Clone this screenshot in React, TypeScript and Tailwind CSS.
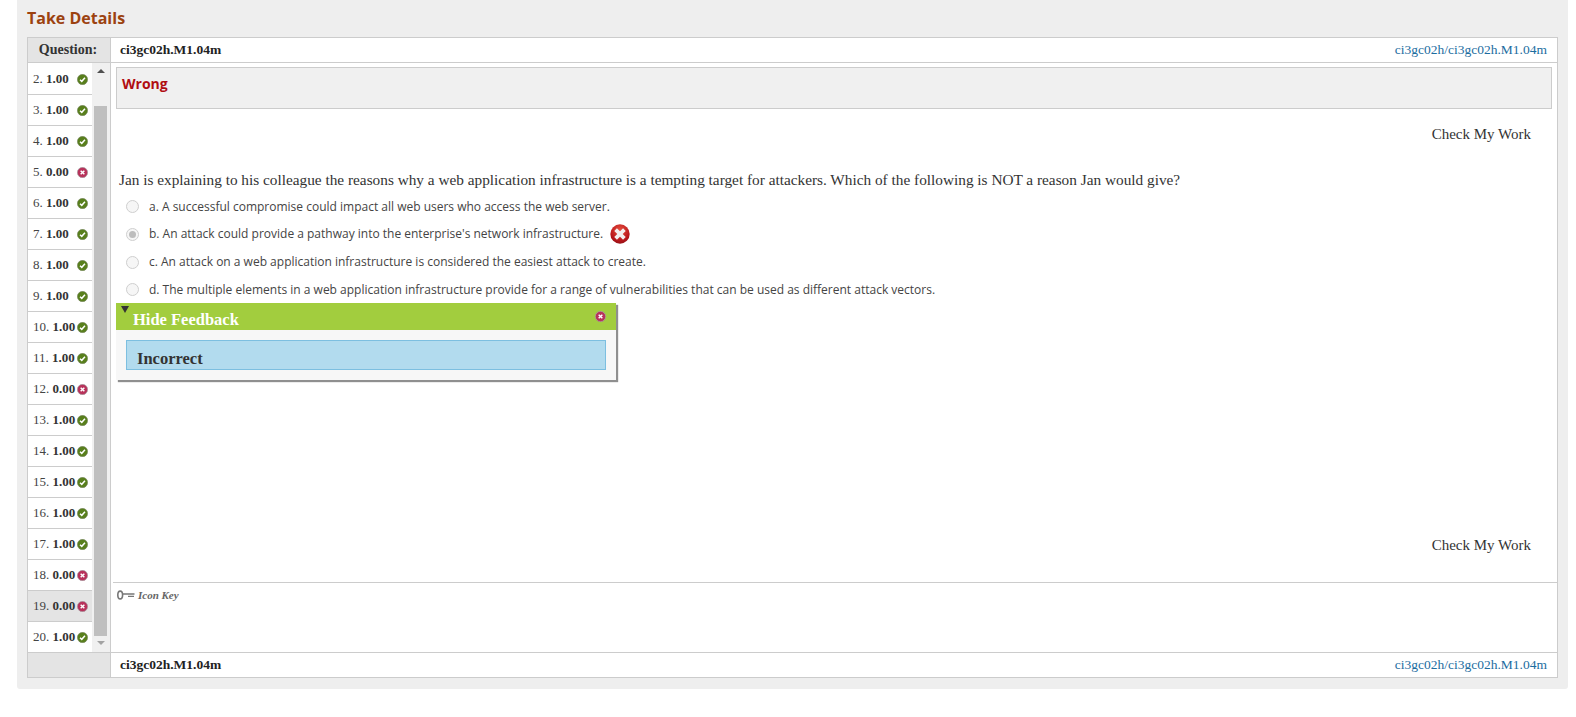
const SERIF = "font-['Liberation_Serif','Times_New_Roman',serif]";
const SANS = "font-['Open_Sans','Noto_Sans',sans-serif]";

const scores = [
  { n: 2, score: "1.00" },
  { n: 3, score: "1.00" },
  { n: 4, score: "1.00" },
  { n: 5, score: "0.00" },
  { n: 6, score: "1.00" },
  { n: 7, score: "1.00" },
  { n: 8, score: "1.00" },
  { n: 9, score: "1.00" },
  { n: 10, score: "1.00" },
  { n: 11, score: "1.00" },
  { n: 12, score: "0.00" },
  { n: 13, score: "1.00" },
  { n: 14, score: "1.00" },
  { n: 15, score: "1.00" },
  { n: 16, score: "1.00" },
  { n: 17, score: "1.00" },
  { n: 18, score: "0.00" },
  { n: 19, score: "0.00" },
  { n: 20, score: "1.00" },
];

const options = [
  { text: "a. A successful compromise could impact all web users who access the web server.", className: "h-[27px]" },
  { text: "b. An attack could provide a pathway into the enterprise's network infrastructure.", className: "h-[28px]", picked: true },
  { text: "c. An attack on a web application infrastructure is considered the easiest attack to create.", className: "h-[28px]" },
  { text: "d. The multiple elements in a web application infrastructure provide for a range of vulnerabilities that can be used as different attack vectors.", className: "h-[27px]" },
];

function CheckDot() {
  return (
    <svg viewBox="0 0 12 12" className="h-[11px] w-[11px] shrink-0" aria-hidden="true">
      <circle cx="6" cy="6" r="5.6" fill="#587f1c" stroke="#7d8c68" strokeWidth="0.7" />
      <path d="M3.3 6.2 5.2 8l3.5-4" fill="none" stroke="#fff" strokeWidth="1.6" />
    </svg>
  );
}

function CrossDot() {
  return (
    <svg viewBox="0 0 12 12" className="h-[11px] w-[11px] shrink-0" aria-hidden="true">
      <circle cx="6" cy="6" r="5.6" fill="#b8315a" stroke="#a9a0a4" strokeWidth="0.8" />
      <path d="M4 4l4 4M8 4l-4 4" fill="none" stroke="#fff" strokeWidth="1.6" />
    </svg>
  );
}

function BigCross() {
  return (
    <svg viewBox="0 0 20 20" className="-ml-[3px] h-[20px] w-[20px] shrink-0" aria-hidden="true">
      <defs>
        <radialGradient id="bigRed" cx="50%" cy="30%" r="75%">
          <stop offset="0%" stopColor="#e8503f" />
          <stop offset="70%" stopColor="#b8161b" />
          <stop offset="100%" stopColor="#8c0f14" />
        </radialGradient>
      </defs>
      <circle cx="10" cy="10" r="9.7" fill="url(#bigRed)" />
      <path d="M5.6 5.6l8.8 8.8M14.4 5.6l-8.8 8.8" fill="none" stroke="#f3efef" strokeWidth="3.8" />
    </svg>
  );
}

function KeyIcon() {
  return (
    <svg viewBox="0 0 18 10" className="h-[10px] w-[18px] shrink-0" aria-hidden="true">
      <ellipse cx="3.2" cy="5" rx="2.4" ry="3.9" fill="none" stroke="#777" strokeWidth="1.6" />
      <path d="M5.5 4h12M11 6.4h6" fill="none" stroke="#777" strokeWidth="1.3" />
    </svg>
  );
}

function Radio({ picked }: { picked?: boolean }) {
  return (
    <span className="flex h-[13px] w-[13px] shrink-0 items-center justify-center rounded-full border border-[#cfcfcf] bg-[#f6f6f6]">
      {picked && <span className="h-[7px] w-[7px] rounded-full bg-[#bdbdbd]" />}
    </span>
  );
}

function Band({ withLabel }: { withLabel?: boolean }) {
  return (
    <div className={`flex h-[24px] shrink-0 ${SERIF}`}>
      <div className="flex w-[83px] shrink-0 items-center justify-center border-r border-[#ccc] bg-[#e4e4e4] pb-px pr-[2px] text-[14px] font-bold text-[#333]">
        {withLabel && "Question:"}
      </div>
      <div className="flex flex-1 items-center justify-between bg-white pl-[9px] pr-[10px]">
        <span className="text-[13.5px] font-bold text-[#222]">ci3gc02h.M1.04m</span>
        <span className="text-[13.5px] text-[#1c6d9f]">ci3gc02h/ci3gc02h.M1.04m</span>
      </div>
    </div>
  );
}

export default function App() {
  return (
    <div className="h-[717px] bg-white pl-[17px] pr-[8px]">
      <div className="h-[689px] rounded-b-[3px] bg-[#eeeeee] px-[10px]">
        <h1 className={`flex h-[37px] items-center pb-[2px] text-[16px] font-bold text-[#9c4210] ${SANS}`}>Take Details</h1>
        <div className="flex h-[641px] w-[1531px] flex-col border border-[#ccc]">
          <div className="border-b border-[#ccc]">
            <Band withLabel />
          </div>
          <div className="flex min-h-0 flex-1">
            {/* question list + scrollbar */}
            <div className="flex w-[83px] shrink-0 border-r border-[#ccc] bg-[#f0f0f0]">
              <ul className={`w-[64px] shrink-0 bg-white pt-px ${SERIF}`}>
                {scores.map((row) => (
                  <li
                    key={row.n}
                    className={`flex h-[31px] items-center justify-between border-b border-[#ccc] pl-[5px] pr-[4px] text-[13px] ${
                      row.n === 19 ? "bg-[#e4e4e4]" : "bg-white"
                    }`}
                  >
                    <span className="whitespace-nowrap text-[#444]">
                      {row.n}. <span className="font-bold text-[#333]">{row.score}</span>
                    </span>
                    {row.score === "1.00" ? <CheckDot /> : <CrossDot />}
                  </li>
                ))}
              </ul>
              <div className="flex w-[17px] flex-col items-center pt-[6px]">
                <span className="h-0 w-0 border-x-[4px] border-b-[4px] border-x-transparent border-b-[#505050]" />
                <span className="mt-[33px] h-[530px] w-[13px] bg-[#bfbfbf]" />
                <span className="mt-[5px] h-0 w-0 border-x-[4px] border-t-[4px] border-x-transparent border-t-[#a3a3a3]" />
              </div>
            </div>

            {/* main question pane */}
            <div className="flex min-w-0 flex-1 flex-col bg-white">
              <div className="flex flex-1 flex-col pl-[5px] pr-[5px] pt-[4px]">
                <div className={`h-[42px] border border-[#ccc] bg-[#f0f0f0] px-[5px] pt-[5px] text-[14px] leading-[22px] font-bold text-[#b00d12] ${SANS}`}>
                  Wrong
                </div>
                <div className={`flex h-[50px] items-center justify-end pr-[21px] text-[15px] text-[#333] ${SERIF}`}>Check My Work</div>
                <p className={`mt-[11px] pl-[3px] text-[15.3px] leading-[20px] text-[#333] ${SERIF}`}>
                  Jan is explaining to his colleague the reasons why a web application infrastructure is a tempting target for attackers. Which of the following is NOT a reason Jan would give?
                </p>
                <div className={`mt-[3px] pl-[10px] text-[12px] text-[#444] ${SANS}`}>
                  {options.map((option) => (
                    <div key={option.text} className={`flex items-center gap-[10px] ${option.className}`}>
                      <Radio picked={option.picked} />
                      <span>{option.text}</span>
                      {option.picked && <BigCross />}
                    </div>
                  ))}
                </div>
                <div className="w-[500px] bg-[#f7f7f7] shadow-[2px_2px_1px_#8f8f8f]">
                  <div className={`flex h-[27px] items-center justify-between bg-[#a2cd3e] pl-[5px] pr-[10px] ${SERIF}`}>
                    <span className="flex items-start">
                      <span className="mt-[2px] h-0 w-0 border-x-[4px] border-t-[7px] border-x-transparent border-t-[#333]" />
                      <span className="ml-[4px] pt-[6px] text-[16.5px] leading-[20px] font-bold text-white">Hide Feedback</span>
                    </span>
                    <CrossDot />
                  </div>
                  <div className="p-[10px]">
                    <div className={`flex h-[30px] items-center border border-[#7dbfe0] bg-[#b2dbee] pl-[10px] pt-[7px] text-[16.5px] leading-[20px] font-bold text-[#333] ${SERIF}`}>
                      Incorrect
                    </div>
                  </div>
                </div>
                <div className={`mt-auto flex h-[73px] items-center justify-end pr-[21px] text-[15px] text-[#333] ${SERIF}`}>Check My Work</div>
              </div>
              <div className="ml-[2px] flex h-[70px] shrink-0 items-start gap-[3px] border-t border-[#ccc] pl-[4px] pt-[7px]">
                <KeyIcon />
                <span className={`text-[11px] leading-[10px] font-bold text-[#666] italic ${SERIF}`}>Icon Key</span>
              </div>
            </div>
          </div>
          <div className="border-t border-[#ccc]">
            <Band />
          </div>
        </div>
      </div>
    </div>
  );
}
